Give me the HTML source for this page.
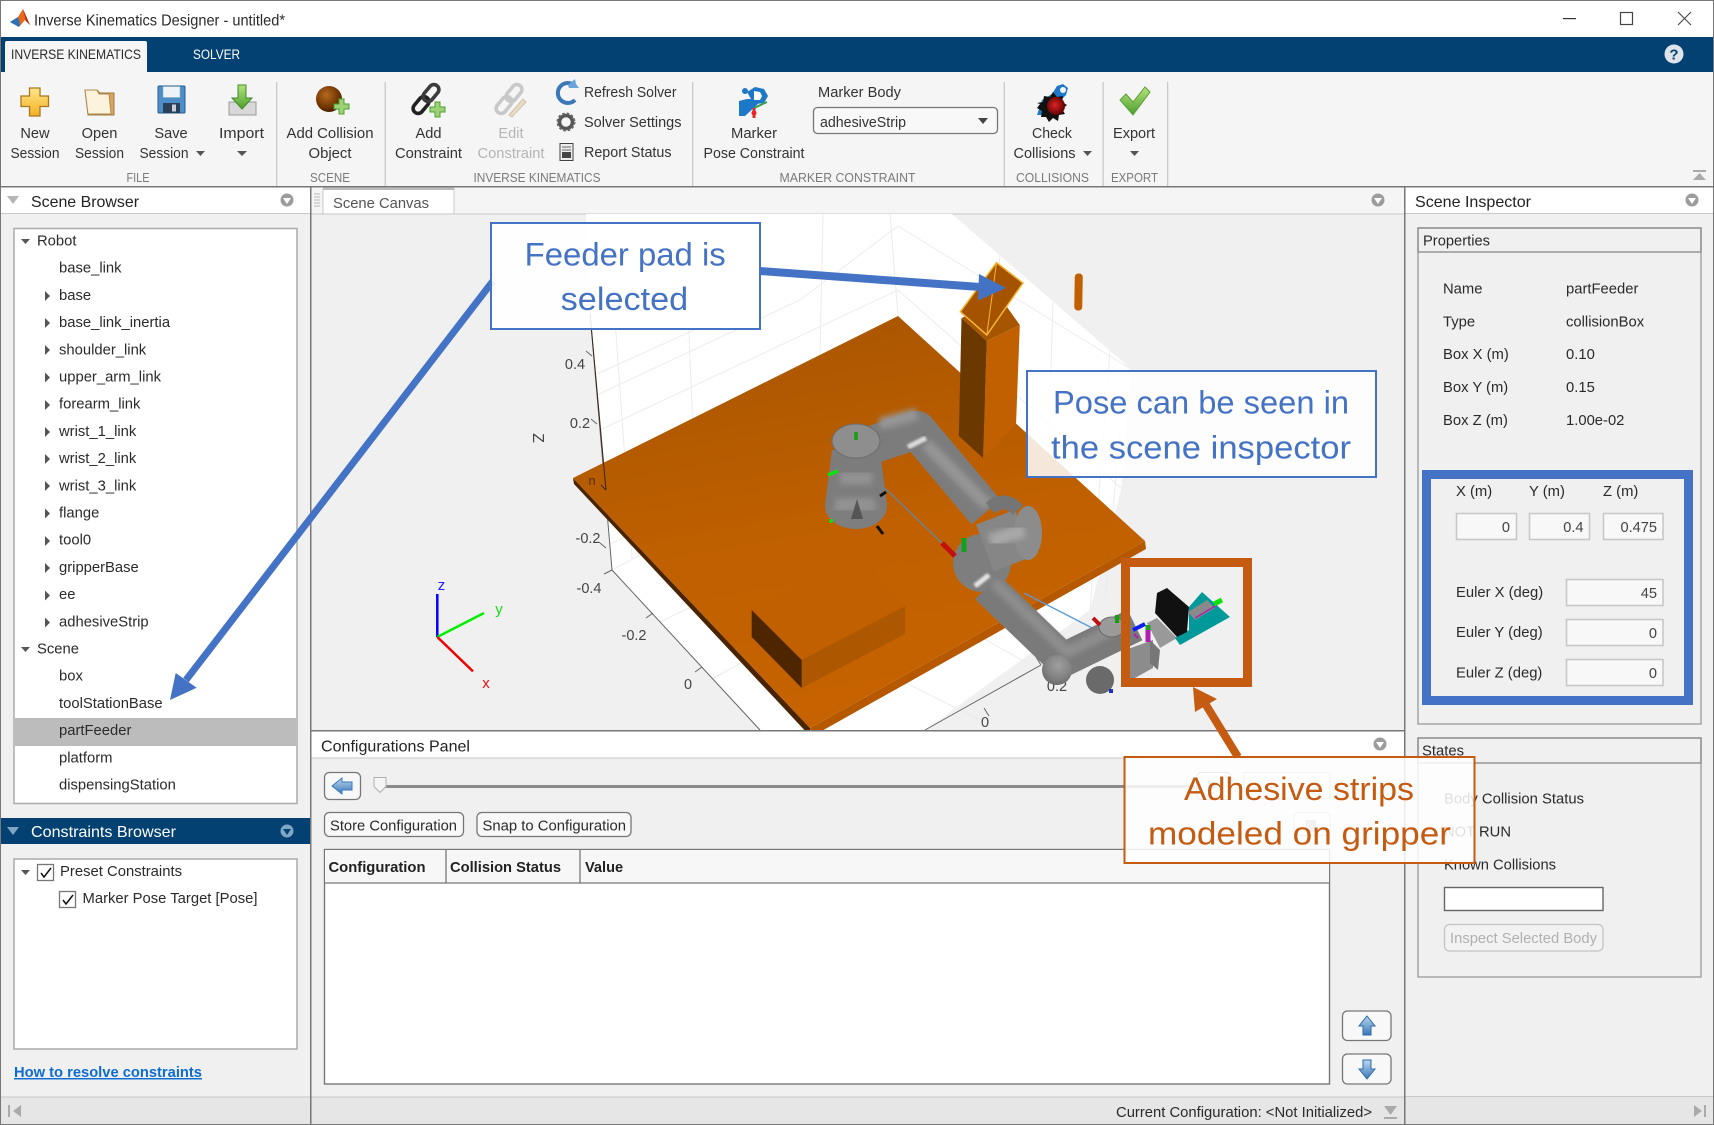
<!DOCTYPE html>
<html><head><meta charset="utf-8"><title>Inverse Kinematics Designer</title>
<style>
html,body{margin:0;padding:0;background:#f0f0f0;width:1714px;height:1125px;overflow:hidden}
svg{display:block;position:absolute;left:0;top:0}
text{font-family:"Liberation Sans",Arial,sans-serif;fill:#2a2a2a;font-size:14.8px}
.r{font-size:14.6px;fill:#333}
.d{font-size:14.6px;fill:#b5b5b5}
.s{font-size:13.2px;fill:#7a7a7a}
.h{font-size:16px;fill:#222}
.ax{font-size:14.5px;fill:#444}
.c{font-size:32px;fill:#4472c4}
.o{font-size:32px;fill:#c55a11}
.b{font-weight:bold;font-size:14.6px;fill:#222}
.v{text-anchor:end;font-size:14.6px;fill:#444}
.m{text-anchor:middle}
</style></head><body>
<svg width="1714" height="1125" viewBox="0 0 1714 1125" xmlns="http://www.w3.org/2000/svg">
<defs>
<linearGradient id="pl" x1="0.25" y1="0" x2="0.5" y2="1"><stop offset="0" stop-color="#a85500"/><stop offset=".55" stop-color="#c06000"/><stop offset="1" stop-color="#c76300"/></linearGradient>
<linearGradient id="gold" x1="0" y1="0" x2="0" y2="1"><stop offset="0" stop-color="#ffe68a"/><stop offset="1" stop-color="#f2b020"/></linearGradient>
<linearGradient id="grn" x1="0" y1="0" x2="0" y2="1"><stop offset="0" stop-color="#b4e27a"/><stop offset="1" stop-color="#4e9e2e"/></linearGradient>
<radialGradient id="ball" cx=".4" cy=".35" r=".7"><stop offset="0" stop-color="#b56a20"/><stop offset=".7" stop-color="#6e3300"/><stop offset="1" stop-color="#3c1b00"/></radialGradient>
<radialGradient id="rball" cx=".45" cy=".45" r=".6"><stop offset="0" stop-color="#d22"/><stop offset="1" stop-color="#500"/></radialGradient>
<radialGradient id="sph" cx=".55" cy=".35" r=".75"><stop offset="0" stop-color="#a0a0a0"/><stop offset=".6" stop-color="#808080"/><stop offset="1" stop-color="#626262"/></radialGradient>
<linearGradient id="arr" x1="0" y1="0" x2="0" y2="1"><stop offset="0" stop-color="#bcd6f0"/><stop offset="1" stop-color="#3a78b8"/></linearGradient>
<filter id="bl" x="-20%" y="-20%" width="140%" height="140%"><feGaussianBlur stdDeviation="3"/></filter>
<filter id="bs" x="-20%" y="-20%" width="140%" height="140%"><feGaussianBlur stdDeviation="1"/></filter>
</defs>

<!-- window -->
<rect width="1714" height="1125" fill="#f0f0f0"/>
<rect width="1714" height="37" fill="#fff"/>
<rect y="37" width="1714" height="35" fill="#024172"/>
<rect y="72" width="1714" height="114" fill="#f5f5f5"/>
<rect y="186" width="1714" height="1.5" fill="#777"/>

<!-- logo + title -->
<polygon points="10,22 18,17 23,9 30,25 25,20 19,27" fill="#e8681c"/>
<polygon points="10,22 18,17 20,24 19,27" fill="#2a72b8"/>
<polygon points="23,9 30,25 26,21" fill="#b02a10"/>
<text x="34" y="25.5" style="font-size:15.6px" textLength="251" lengthAdjust="spacingAndGlyphs">Inverse Kinematics Designer - untitled*</text>
<rect x="1563" y="18" width="13" height="1.2" fill="#333"/>
<rect x="1620.5" y="12.5" width="12" height="12" fill="none" stroke="#444" stroke-width="1.2"/>
<path d="M1678 12L1691 25M1691 12L1678 25" stroke="#444" stroke-width="1.1"/>

<!-- tabs -->
<path d="M5 72V43q0-2 2-2H145q2 0 2 2V72z" fill="#f5f5f5"/>
<text x="11" y="59" style="font-size:13.4px" textLength="130" lengthAdjust="spacingAndGlyphs" fill="#333">INVERSE KINEMATICS</text>
<text x="193" y="59" style="font-size:13.4px;fill:#fff" textLength="47" lengthAdjust="spacingAndGlyphs">SOLVER</text>
<circle cx="1674" cy="54" r="9.5" fill="#dfe4ea"/>
<text x="1674" y="59.5" class="m" style="font-size:15px;font-weight:bold;fill:#024172">?</text>

<!-- separators -->
<g fill="#c9c9c9"><rect x="276" y="82" width="1.3" height="104"/><rect x="384.6" y="82" width="1.3" height="104"/><rect x="692" y="82" width="1.3" height="104"/><rect x="1003.7" y="82" width="1.3" height="104"/><rect x="1102.5" y="82" width="1.3" height="104"/><rect x="1167" y="82" width="1.3" height="104"/></g>

<!-- icons: new -->
<path d="M29.500 88h10.500v8h8.500v10.500h-8.500v9.500h-10.500v-9.500h-8.500v-10.500h8.500z" fill="url(#gold)" stroke="#a87820" stroke-width="1.3"/>
<!-- open -->
<path d="M85 90h12l3 3h14v22H88z" fill="#d9a55c" stroke="#a07a3c" stroke-width="1"/>
<path d="M85 90h12l2 4h10l2 20H88z" fill="#fbf3dc" stroke="#b08b50" stroke-width="1"/>
<!-- save -->
<rect x="158" y="86" width="27" height="27" rx="1" fill="#4d8ec8" stroke="#1f5c92"/>
<rect x="163" y="86.500" width="17" height="11" fill="#eef3f8" stroke="#8aa" stroke-width=".5"/>
<rect x="163" y="103" width="17" height="10" fill="#2a3f58"/>
<rect x="172" y="104.500" width="4" height="7" fill="#ccd"/>
<!-- import -->
<rect x="229" y="102" width="27" height="13" fill="#d8d8d8" stroke="#9a9a9a"/>
<path d="M238 85h8v13h6l-10 11-10-11h6z" fill="url(#grn)" stroke="#3e8a26" stroke-width="1"/>
<!-- collision -->
<circle cx="329" cy="99" r="13" fill="url(#ball)"/>
<path d="M334 103h5v-5h5v5h5v5h-5v5h-5v-5h-5z" transform="translate(0,1)" fill="#9ed27a" stroke="#4e9e2e"/>
<!-- add constraint -->
<g fill="none" stroke-width="3.6">
<rect x="-9.500" y="-5" width="19" height="10" rx="5" transform="translate(421,105) rotate(-50)" stroke="#222"/>
<rect x="-9.500" y="-5" width="19" height="10" rx="5" transform="translate(431,93) rotate(-50)" stroke="#3c3c3c"/>
</g>
<path d="M430 107h5v-5h5v5h5v5h-5v5h-5v-5h-5z" fill="#9ed27a" stroke="#4e9e2e"/>
<!-- edit constraint -->
<g fill="none" stroke="#c8c8c8" stroke-width="3.6">
<rect x="-9.500" y="-5" width="19" height="10" rx="5" transform="translate(504,105) rotate(-50)"/>
<rect x="-9.500" y="-5" width="19" height="10" rx="5" transform="translate(514,93) rotate(-50)"/>
</g>
<path d="M509 115l14-16 3 3-14 15z" fill="#e8dcc2" stroke="#cfc4aa"/>
<!-- refresh -->
<path d="M575 86a10 10 0 1 0 0 14" fill="none" stroke="#3a78b8" stroke-width="4"/>
<path d="M568 85l7-6 1 5 3 4-10 0z" fill="#6aa4d8"/>
<text x="584" y="97" class="r" textLength="92.500" lengthAdjust="spacingAndGlyphs">Refresh Solver</text>
<!-- settings -->
<circle cx="566" cy="122" r="6.500" fill="none" stroke="#555" stroke-width="3.500"/>
<circle cx="566" cy="122" r="8.500" fill="none" stroke="#666" stroke-width="2" stroke-dasharray="2.500 2"/>
<text x="584" y="127" class="r" textLength="97.500" lengthAdjust="spacingAndGlyphs">Solver Settings</text>
<!-- report -->
<rect x="560" y="143.500" width="13" height="17" fill="#eee" stroke="#444"/>
<rect x="562" y="152" width="9" height="6" fill="#444"/>
<path d="M562 147h9M562 150h9" stroke="#666"/>
<text x="584" y="157" class="r" textLength="87.500" lengthAdjust="spacingAndGlyphs">Report Status</text>
<!-- marker pose -->
<path d="M739 101l8-2 9 0 3 4-14 13-6 0z" fill="#1e78c8"/>
<path d="M747 92l8-5 9 2 4 7-4 7-9 1-4-5z" fill="#1e78c8"/><path d="M754 91l6 1 2 4-2 4-6 0z" fill="#fff"/>
<circle cx="745" cy="91" r="3" fill="#1e78c8"/>
<path d="M754 108l13-6" stroke="#3a9a50" stroke-width="2"/>
<path d="M754 108v10" stroke="#c33" stroke-width="3"/><circle cx="754" cy="113" r="2.500" fill="#e22"/>
<!-- dropdown -->
<text x="818" y="97" class="r" textLength="83" lengthAdjust="spacingAndGlyphs">Marker Body</text>
<rect x="813.500" y="107.500" width="184" height="26" rx="4" fill="#f8f8f8" stroke="#777" stroke-width="1.300"/>
<text x="820" y="127" class="r" textLength="86" lengthAdjust="spacingAndGlyphs">adhesiveStrip</text>
<polygon points="978,118 988,118 983,124" fill="#444"/>
<!-- check collision -->
<path d="M1037 115l5-15 10-6 5-8 6-2 5 4-2 7-8 8-5 12z" fill="#1e78c8"/>
<circle cx="1063" cy="90" r="3" fill="#f5f5f5"/>
<path d="M1037 103l6-1 1-6 6 1 3-5 4 5 6-1-1 6 5 3-5 4 3 5-6 1-1 6-5-3-4 4-3-5-5 0 1-6-5-3 3-4z" fill="#111"/>
<circle cx="1056" cy="106" r="9" fill="url(#rball)"/>
<!-- export -->
<path d="M1120 100l6-6 7 8 12-15 5 5-17 23z" fill="url(#grn)" stroke="#5a9e3c"/>

<!-- ribbon labels -->
<g class="r">
<text x="35" y="138" class="r m">New</text><text x="35" y="158" class="r m" textLength="49" lengthAdjust="spacingAndGlyphs">Session</text>
<text x="99.500" y="138" class="r m">Open</text><text x="99.500" y="158" class="r m" textLength="49" lengthAdjust="spacingAndGlyphs">Session</text>
<text x="171" y="138" class="r m">Save</text><text x="139.500" y="158" class="r" textLength="49" lengthAdjust="spacingAndGlyphs">Session</text>
<text x="241.500" y="138" class="r m" textLength="45" lengthAdjust="spacingAndGlyphs">Import</text>
<text x="330" y="138" class="r m" textLength="87" lengthAdjust="spacingAndGlyphs">Add Collision</text><text x="330" y="158" class="r m" textLength="43" lengthAdjust="spacingAndGlyphs">Object</text>
<text x="428.500" y="138" class="r m">Add</text><text x="428.500" y="158" class="r m" textLength="67" lengthAdjust="spacingAndGlyphs">Constraint</text>
<text x="511" y="138" class="d m">Edit</text><text x="511" y="158" class="d m" textLength="67" lengthAdjust="spacingAndGlyphs">Constraint</text>
<text x="754" y="138" class="r m" textLength="46" lengthAdjust="spacingAndGlyphs">Marker</text><text x="754" y="158" class="r m" textLength="101" lengthAdjust="spacingAndGlyphs">Pose Constraint</text>
<text x="1052" y="138" class="r m" textLength="40" lengthAdjust="spacingAndGlyphs">Check</text><text x="1013.500" y="158" class="r" textLength="62" lengthAdjust="spacingAndGlyphs">Collisions</text>
<text x="1134" y="138" class="r m" textLength="42" lengthAdjust="spacingAndGlyphs">Export</text>
</g>
<g fill="#555"><polygon points="196,151 205,151 200.500,156"/><polygon points="237,151 247,151 242,156"/><polygon points="1083,151 1092,151 1087.500,156"/><polygon points="1130,151 1139,151 1134.500,156"/></g>
<text x="138" y="182" class="s m" textLength="23" lengthAdjust="spacingAndGlyphs">FILE</text>
<text x="330" y="182" class="s m" textLength="40" lengthAdjust="spacingAndGlyphs">SCENE</text>
<text x="537" y="182" class="s m" textLength="127" lengthAdjust="spacingAndGlyphs">INVERSE KINEMATICS</text>
<text x="847.500" y="182" class="s m" textLength="136" lengthAdjust="spacingAndGlyphs">MARKER CONSTRAINT</text>
<text x="1052.500" y="182" class="s m" textLength="73" lengthAdjust="spacingAndGlyphs">COLLISIONS</text>
<text x="1134.500" y="182" class="s m" textLength="47" lengthAdjust="spacingAndGlyphs">EXPORT</text>
<rect x="1693" y="170" width="13" height="2" fill="#aaa"/><polygon points="1699.500,173 1706,180 1693,180" fill="#aaa"/>

<!-- ===== canvas area ===== -->
<rect x="311" y="187.500" width="1094" height="27" fill="#f5f5f5"/>
<rect x="311" y="214" width="1094" height="517" fill="#f0f0f0"/>
<rect x="311" y="213.500" width="1094" height="1" fill="#c8c8c8"/>
<path d="M323 214V189q0-1 1-1H453q1 0 1 1V214z" fill="#fff" stroke="#c8c8c8"/>
<rect x="323" y="188" width="131" height="2" fill="#bbb"/>
<text x="333" y="208" style="font-size:14.6px;fill:#555" textLength="96" lengthAdjust="spacingAndGlyphs">Scene Canvas</text>
<path d="M314 194h6M314 197h6M314 200h6M314 203h6M314 206h6" stroke="#ccc" stroke-width="1.500"/>

<!-- axes walls -->
<polygon points="586,214 952,214 1131,369 1121,490 1090,610 925,730 760,730 612,570 590,313" fill="#fff"/>
<g stroke="#ececec" stroke-width="1" fill="none">
<path d="M597 395L800 300 898 226M597 374L760 300M600 430L898 290M604 490L898 355 M608 545L800 455"/>
<path d="M615 320L632 558M688 310L694 455M823 214L820 355M890 214L898 316"/>
<path d="M898 226L1131 369M898 290L1121 488M898 355L1121 560"/>
<path d="M1000 255L990 400M1053 300L1048 470M1110 350L1090 610M1120 430L1105 600"/>
<path d="M612 570L800 470M660 622L850 530M710 680L900 575M980 720L760 610M1040 670L860 570"/>
</g>
<path d="M590 313L612 570L760 730M925 730L1041 665" fill="none" stroke="#666" stroke-width="1"/>
<path d="M592 356l-6-5M597 424l-6-5M606 548l-6-5M612 570l-8 4M653 613l-7 5M702 667l-7 5M984 708l5 8M1041 665l-5-8" stroke="#666" stroke-width="1" fill="none"/>
<text x="575" y="369" class="ax m">0.4</text><text x="580" y="428" class="ax m">0.2</text>
<text x="588" y="543" class="ax m">-0.2</text><text x="589" y="593" class="ax m">-0.4</text>
<text x="634" y="640" class="ax m">-0.2</text><text x="688" y="689" class="ax m">0</text><text x="985" y="727" class="ax m">0</text><text x="1057" y="691" class="ax m">0.2</text>
<text transform="translate(533,438) rotate(90)" class="ax m" style="font-size:16px">Z</text>

<!-- platform -->
<polygon points="1145,541 810,728 811,737 1146,549" fill="#b55800"/>
<polygon points="573,478 810,728 810,736 574,484" fill="#4a2400"/>
<polygon points="573,478 898,316 1145,541 810,728" fill="url(#pl)"/>
<path d="M590 313L606 490" stroke="#3a2510" stroke-width="1" fill="none"/>
<text x="592" y="485" class="m" style="font-size:13px;fill:#5a3008">n</text>
<path d="M606 490l-5-5" stroke="#3a2510"/>

<!-- small box -->
<polygon points="751.700,610 801.700,660 905,606 855,556" fill="#c06000"/>
<polygon points="801.700,660 905,606 905,634 801.700,688" fill="#ad5800"/>
<polygon points="751.700,610 801.700,660 801.700,688 751.700,637" fill="#4d2600"/>

<!-- pillar -->
<polygon points="986.800,341 1019.800,325 1016,425 983,458" fill="#c06000"/>
<polygon points="961.500,318 986.800,341 983,458 958.800,436" fill="#6b3800"/>
<polygon points="961.500,318 1002,300 1019.800,325 986.800,341" fill="#a85500"/>
<polygon points="996.500,262.600 1023,283 986.800,335 960.300,311.800" fill="#a65300" stroke="#f2b632" stroke-width="1.500"/>
<path d="M996.500 262.600L986.800 335L1023 283" fill="none" stroke="#f2b632" stroke-width="1"/>
<rect x="1074.500" y="273.500" width="8" height="37" rx="3.500" fill="#c06000" transform="rotate(1 1078 292)"/>

<!-- triad -->
<path d="M437.300 637V594" stroke="#0000ff" stroke-width="2.500"/>
<path d="M437.300 637L484 613" stroke="#00f000" stroke-width="2.500"/>
<path d="M437.300 637L473 671.400" stroke="#f00000" stroke-width="2.500"/>
<text x="441.500" y="590" class="m" style="font-size:15px;fill:#2222ff">z</text>
<text x="499" y="614" class="m" style="font-size:15px;fill:#18d818">y</text>
<text x="486" y="688" class="m" style="font-size:15px;fill:#f01010">x</text>

<!-- frame interior -->
<rect x="1128" y="565" width="118" height="116" fill="#f0f0f0"/>

<!-- robot -->
<path d="M870 474L942 543" stroke="#4a90d0" stroke-width="1"/>
<path d="M1024 593L1100 632" stroke="#5a9ad8" stroke-width="1.300"/>
<ellipse cx="856" cy="506" rx="31" ry="23" fill="#7e7e7e"/>
<polygon points="832,450 880,450 887,505 825,505" fill="#7c7c7c"/>
<path d="M862 448L917 430L986 512" fill="none" stroke="#7c7c7c" stroke-width="38" stroke-linejoin="round"/>
<path d="M840 478H872M835 505H875" stroke="#929292" stroke-width="14" filter="url(#bl)"/>
<ellipse cx="856" cy="441" rx="24" ry="17" fill="#8e8e8e" stroke="#6c6c6c"/>
<path d="M851 519l6-20 6 20z" fill="#555"/>
<path d="M880 424L917 414M926 444L988 506" fill="none" stroke="#959595" stroke-width="12" filter="url(#bl)"/>
<path d="M908 447l18-9" stroke="#dcdcdc" stroke-width="5" filter="url(#bs)"/>
<circle cx="982" cy="563" r="29" fill="#7e7e7e"/>
<path d="M985 548L1024 533" stroke="#868686" stroke-width="50"/>
<ellipse cx="1028" cy="533" rx="14" ry="27" fill="#8c8c8c"/>
<path d="M990 508Q1005 496 1018 510" stroke="#757575" stroke-width="14" fill="none"/>
<path d="M990 541L1024 530" stroke="#a8a8a8" stroke-width="14" filter="url(#bl)"/>
<path d="M987 587L1063 660L1135 625" fill="none" stroke="#7a7a7a" stroke-width="34" stroke-linejoin="round"/>
<path d="M994 582L1067 652L1125 624" fill="none" stroke="#8e8e8e" stroke-width="11" filter="url(#bl)"/>
<path d="M975 586l14-11" stroke="#e4e4e4" stroke-width="5" filter="url(#bs)"/>
<circle cx="1100" cy="680" r="14" fill="#6a6a6a"/>
<circle cx="1057" cy="670" r="15" fill="url(#sph)"/>
<ellipse cx="1112" cy="627" rx="13" ry="10" fill="#9a9a9a" stroke="#6a6a6a"/>
<path d="M1125 650L1153 640V668L1135 678H1125z" fill="#8c8c8c"/>
<polygon points="1150,640 1160,650 1158,670 1150,663" fill="#777"/>
<polygon points="1147,623 1157,618 1177,638 1160,648" fill="#999"/>
<polygon points="1202,592 1230,617 1180,645 1175,638 1189,630 1189,607" fill="#009999"/>
<polygon points="1157,593 1167,588 1189,607 1187,632 1177,637 1155,613" fill="#111"/>
<polygon points="1188,612 1207,600 1215,608 1195,620" fill="#8a8a8a"/>
<path d="M1195 618L1217 605" stroke="#b020b0" stroke-width="1.500"/>
<path d="M1214 604l8-4" stroke="#10e010" stroke-width="5"/>
<path d="M1133 630L1145 624" stroke="#0a20f0" stroke-width="4"/>
<path d="M1148 629V642" stroke="#b020b0" stroke-width="5"/><path d="M1148 625V630" stroke="#20a020" stroke-width="5"/>
<path d="M1134 634l4 4" stroke="#b020b0" stroke-width="2"/>
<path d="M1117 615V623" stroke="#10a010" stroke-width="4"/>
<path d="M1093 618L1100 625" stroke="#c01010" stroke-width="4"/>
<path d="M1111 689V693" stroke="#1a30c0" stroke-width="4"/>
<path d="M964 538V552" stroke="#10a020" stroke-width="5"/>
<path d="M942 543L955 556" stroke="#c01010" stroke-width="5"/>
<path d="M856 432V440" stroke="#10a010" stroke-width="3.500"/>
<path d="M828 475l10-4" stroke="#10e010" stroke-width="3.500"/>
<path d="M886 492l-6 4M877 526l6 8" stroke="#111" stroke-width="3"/>
<circle cx="831" cy="521" r="2" fill="#10e010"/>

<!-- orange frame -->
<rect x="1125.500" y="562.500" width="122" height="120" fill="none" stroke="#c55a11" stroke-width="9"/>

<!-- ===== left panel ===== -->
<rect x="0" y="187.500" width="310" height="938" fill="#f0f0f0"/>
<rect x="0" y="187.500" width="310" height="26" fill="#fff"/>
<rect x="0" y="213" width="310" height="1" fill="#c8c8c8"/>
<polygon points="7,196 19,196 13,204" fill="#b5b5b5"/>
<text x="31" y="207" class="h" textLength="108" lengthAdjust="spacingAndGlyphs">Scene Browser</text>
<rect x="14" y="228.500" width="283" height="575" fill="#fff" stroke="#aaa" stroke-width="1.500"/>
<rect x="15" y="718" width="281" height="28" fill="#bcbcbc"/>
<g transform="translate(0,0.5)">
<text x="37" y="245">Robot</text>
<text x="59" y="272.200">base_link</text>
<text x="59" y="299.400">base</text>
<text x="59" y="326.600">base_link_inertia</text>
<text x="59" y="353.800">shoulder_link</text>
<text x="59" y="381">upper_arm_link</text>
<text x="59" y="408.200">forearm_link</text>
<text x="59" y="435.400">wrist_1_link</text>
<text x="59" y="462.600">wrist_2_link</text>
<text x="59" y="489.800">wrist_3_link</text>
<text x="59" y="517">flange</text>
<text x="59" y="544.200">tool0</text>
<text x="59" y="571.400">gripperBase</text>
<text x="59" y="598.600">ee</text>
<text x="59" y="625.800">adhesiveStrip</text>
<text x="37" y="653">Scene</text>
<text x="59" y="680.200">box</text>
<text x="59" y="707.400">toolStationBase</text>
<text x="59" y="734.600">partFeeder</text>
<text x="59" y="761.800">platform</text>
<text x="59" y="789">dispensingStation</text>
</g>
<g fill="#555">
<polygon points="21,239 30,239 25.500,244"/><polygon points="21,647 30,647 25.500,652"/>
<polygon points="45,291 50,296 45,301"/><polygon points="45,318 50,323 45,328"/><polygon points="45,345 50,350 45,355"/><polygon points="45,372.500 50,377.500 45,382.500"/><polygon points="45,400 50,405 45,410"/><polygon points="45,427 50,432 45,437"/><polygon points="45,454 50,459 45,464"/><polygon points="45,481 50,486 45,491"/><polygon points="45,508.500 50,513.500 45,518.500"/><polygon points="45,536 50,541 45,546"/><polygon points="45,563 50,568 45,573"/><polygon points="45,590.500 50,595.500 45,600.500"/><polygon points="45,617.500 50,622.500 45,627.500"/>
</g>

<rect x="0" y="818" width="310" height="26" fill="#024172"/>
<polygon points="7,827 19,827 13,835" fill="#7fa6c4"/>
<text x="31" y="837" class="h" style="fill:#fff" textLength="145" lengthAdjust="spacingAndGlyphs">Constraints Browser</text>
<rect x="14" y="859" width="283" height="190" fill="#fff" stroke="#aaa" stroke-width="1.500"/>
<polygon points="21,870 30,870 25.500,875" fill="#555"/>
<rect x="37.500" y="864.500" width="16" height="16" fill="#fff" stroke="#777" stroke-width="1.300"/>
<path d="M41 873l3 4 7-9" fill="none" stroke="#111" stroke-width="1.500"/>
<text x="60" y="876" textLength="122" lengthAdjust="spacingAndGlyphs">Preset Constraints</text>
<rect x="59.500" y="891.500" width="16" height="16" fill="#fff" stroke="#777" stroke-width="1.300"/>
<path d="M63 900l3 4 7-9" fill="none" stroke="#111" stroke-width="1.500"/>
<text x="82.500" y="903" textLength="175" lengthAdjust="spacingAndGlyphs">Marker Pose Target [Pose]</text>
<text x="14" y="1077" style="font-size:14.6px;font-weight:bold;fill:#0d6cd0;text-decoration:underline" textLength="188" lengthAdjust="spacingAndGlyphs">How to resolve constraints</text>
<rect x="0" y="1097" width="310" height="28" fill="#e6e6e6"/>
<rect x="0" y="1096.500" width="310" height="1" fill="#c8c8c8"/>
<rect x="8" y="1105" width="2" height="12" fill="#aaa"/><polygon points="21,1105 21,1117 13,1111" fill="#aaa"/>

<!-- ===== config panel ===== -->
<rect x="311" y="731" width="1094" height="394" fill="#f0f0f0"/>
<rect x="311" y="730" width="1094" height="1.500" fill="#777"/>
<rect x="311" y="731.500" width="1094" height="26" fill="#fff"/>
<rect x="311" y="757.500" width="1094" height="1" fill="#c8c8c8"/>
<text x="321" y="751.500" class="h" textLength="149" lengthAdjust="spacingAndGlyphs">Configurations Panel</text>
<rect x="324.500" y="772.500" width="36" height="27" rx="5" fill="#f8f8f8" stroke="#777" stroke-width="1.300"/>
<path d="M332 786l10-8v4h10v8h-10v4z" fill="url(#arr)" stroke="#3a78b8"/>
<rect x="385" y="785" width="810" height="3" fill="#8a8a8a"/>
<path d="M374 777.500h12v9l-6 6-6-6z" fill="#f5f5f5" stroke="#b0b0b0"/>
<rect x="1196.500" y="772.500" width="35" height="27" rx="5" fill="#f8f8f8" stroke="#888"/>
<path d="M1208 780l10 6-10 6z" fill="#6a9ad0"/>
<rect x="1244" y="772.500" width="86" height="26" fill="#f8f8f8" stroke="#aaa"/>
<rect x="324.500" y="812.500" width="139" height="24" rx="5" fill="#f8f8f8" stroke="#777" stroke-width="1.300"/>
<text x="330" y="830.500" textLength="127" lengthAdjust="spacingAndGlyphs">Store Configuration</text>
<rect x="477" y="812.500" width="154" height="24" rx="5" fill="#f8f8f8" stroke="#777" stroke-width="1.300"/>
<text x="482.500" y="830.500" textLength="143.500" lengthAdjust="spacingAndGlyphs">Snap to Configuration</text>
<rect x="1294" y="812.500" width="36" height="23" rx="5" fill="#f8f8f8" stroke="#aaa"/>
<rect x="1306" y="820" width="10" height="12" fill="#aaa"/>
<rect x="324.500" y="849.500" width="1005" height="234.500" fill="#fff" stroke="#777" stroke-width="1.400"/>
<rect x="325" y="850" width="1004" height="33" fill="#f7f7f7"/>
<path d="M324.500 883H1329.500M446 850V883M580 850V883" stroke="#777" stroke-width="1.300"/>
<text x="328.500" y="872" class="b" textLength="97" lengthAdjust="spacingAndGlyphs">Configuration</text>
<text x="450" y="872" class="b" textLength="111" lengthAdjust="spacingAndGlyphs">Collision Status</text>
<text x="585" y="872" class="b">Value</text>
<rect x="1342.500" y="1011" width="48.500" height="29.500" rx="5" fill="#f8f8f8" stroke="#777" stroke-width="1.300"/>
<path d="M1367 1016l8 10h-4v9h-8v-9h-4z" fill="url(#arr)" stroke="#2a6aa8"/>
<rect x="1342.500" y="1054" width="48.500" height="30" rx="5" fill="#f8f8f8" stroke="#777" stroke-width="1.300"/>
<path d="M1367 1079l8-10h-4v-9h-8v9h-4z" fill="url(#arr)" stroke="#2a6aa8"/>
<rect x="311" y="1097" width="1094" height="28" fill="#e6e6e6"/>
<rect x="311" y="1096.500" width="1094" height="1" fill="#c8c8c8"/>
<text x="1116" y="1117" style="font-size:14.6px" textLength="256" lengthAdjust="spacingAndGlyphs">Current Configuration: &lt;Not Initialized&gt;</text>
<polygon points="1384,1106 1397,1106 1390.500,1115" fill="#aaa"/><rect x="1384" y="1117" width="13" height="2" fill="#aaa"/>

<!-- ===== right panel ===== -->
<rect x="1405" y="187.500" width="309" height="938" fill="#f0f0f0"/>
<rect x="1405" y="187.500" width="309" height="26" fill="#fff"/>
<rect x="1405" y="213" width="309" height="1" fill="#c8c8c8"/>
<text x="1415" y="207" class="h" textLength="116" lengthAdjust="spacingAndGlyphs">Scene Inspector</text>
<rect x="1418" y="228" width="283" height="496" fill="none" stroke="#999" stroke-width="1.300"/>
<rect x="1418" y="228" width="283" height="24" fill="none" stroke="#888" stroke-width="1.300"/>
<text x="1423" y="245.500" textLength="67" lengthAdjust="spacingAndGlyphs">Properties</text>
<g>
<text x="1443" y="293.500">Name</text><text x="1566" y="293.500">partFeeder</text>
<text x="1443" y="326.500">Type</text><text x="1566" y="326.500">collisionBox</text>
<text x="1443" y="359">Box X (m)</text><text x="1566" y="359">0.10</text>
<text x="1443" y="392">Box Y (m)</text><text x="1566" y="392">0.15</text>
<text x="1443" y="425">Box Z (m)</text><text x="1566" y="425">1.00e-02</text>
</g>
<rect x="1426.500" y="474.500" width="262" height="226" fill="#f0f0f0" stroke="#4472c4" stroke-width="9"/>
<g>
<text x="1456" y="496">X (m)</text><text x="1529" y="496">Y (m)</text><text x="1603" y="496">Z (m)</text>
<text x="1456" y="597">Euler X (deg)</text><text x="1456" y="637">Euler Y (deg)</text><text x="1456" y="677.500">Euler Z (deg)</text>
</g>
<g fill="#f8f8f8" stroke="#c8c8c8" stroke-width="1.600">
<rect x="1456.500" y="513.500" width="60" height="26"/><rect x="1529.500" y="513.500" width="60" height="26"/><rect x="1603.500" y="513.500" width="59.500" height="26"/>
<rect x="1566.500" y="579.500" width="96.500" height="26"/><rect x="1566.500" y="619.500" width="96.500" height="26"/><rect x="1566.500" y="659.500" width="96.500" height="26"/>
</g>
<text x="1510" y="532" class="v">0</text><text x="1583.500" y="532" class="v">0.4</text><text x="1657" y="532" class="v">0.475</text>
<text x="1657" y="598" class="v">45</text><text x="1657" y="638" class="v">0</text><text x="1657" y="678" class="v">0</text>

<rect x="1418" y="738" width="283" height="239" fill="none" stroke="#999" stroke-width="1.300"/>
<rect x="1418" y="738" width="283" height="25" fill="none" stroke="#888" stroke-width="1.300"/>
<text x="1422" y="755.500" textLength="42" lengthAdjust="spacingAndGlyphs">States</text>
<text x="1444" y="803.500" textLength="140" lengthAdjust="spacingAndGlyphs">Body Collision Status</text>
<text x="1444" y="836.500" textLength="67" lengthAdjust="spacingAndGlyphs">NOT RUN</text>
<text x="1444" y="869.500" textLength="112" lengthAdjust="spacingAndGlyphs">Known Collisions</text>
<rect x="1444.500" y="887.500" width="158.500" height="23" fill="#fff" stroke="#666" stroke-width="1.400"/>
<rect x="1444.500" y="924.500" width="158.500" height="26.500" rx="5" fill="#f2f2f2" stroke="#c4c4c4" stroke-width="1.300"/>
<text x="1450" y="943" style="font-size:14.6px;fill:#b0b0b0" textLength="147" lengthAdjust="spacingAndGlyphs">Inspect Selected Body</text>
<rect x="1405" y="1096.500" width="309" height="28.500" fill="#e6e6e6"/>
<rect x="1405" y="1096" width="309" height="1" fill="#c8c8c8"/>
<polygon points="1694,1105 1694,1117 1702,1111" fill="#aaa"/><rect x="1704" y="1105" width="2" height="12" fill="#aaa"/>

<!-- panel menu dots -->
<g fill="#9c9c9c"><circle cx="287" cy="200" r="6.500"/><circle cx="1378" cy="200" r="6.500"/><circle cx="1692" cy="200" r="6.500"/><circle cx="1380" cy="744" r="6.500"/></g>
<circle cx="287" cy="831" r="6.500" fill="#7fa6c4"/>
<g fill="#fff"><polygon points="283,198 291,198 287,204"/><polygon points="1374,198 1382,198 1378,204"/><polygon points="1688,198 1696,198 1692,204"/><polygon points="1376,742 1384,742 1380,748"/></g>
<polygon points="283,829 291,829 287,835" fill="#024172"/>

<!-- vertical dividers -->
<rect x="310" y="187" width="1.500" height="938" fill="#777"/>
<rect x="1404" y="187" width="1.500" height="938" fill="#777"/>
<rect x="0" y="0" width="1714" height="1" fill="#777"/>
<rect x="0" y="1124" width="1714" height="1" fill="#777"/>
<rect x="0" y="0" width="1" height="1125" fill="#777"/>
<rect x="1713" y="0" width="1" height="1125" fill="#777"/>

<!-- ===== callouts ===== -->
<path d="M493 281L186 680" stroke="#4472c4" stroke-width="7"/>
<polygon points="170,700 175.700,673 196.700,687.700" fill="#4472c4"/>
<path d="M760 271L980 287" stroke="#4472c4" stroke-width="8"/>
<polygon points="1006,288 979,274 978,300.500" fill="#4472c4"/>
<path d="M1206 705L1238 757" stroke="#c55a11" stroke-width="8"/>
<polygon points="1193,687 1217,699 1195,712" fill="#c55a11"/>

<rect x="491" y="223" width="269" height="106" fill="#fff" fill-opacity=".9" stroke="#4472c4" stroke-width="2"/>
<text x="524.700" y="265.500" class="c" textLength="201" lengthAdjust="spacingAndGlyphs">Feeder pad is</text>
<text x="560.700" y="310" class="c" textLength="127.500" lengthAdjust="spacingAndGlyphs">selected</text>

<rect x="1027" y="371" width="349" height="106" fill="#fff" fill-opacity=".85" stroke="#4472c4" stroke-width="2"/>
<text x="1053" y="413.500" class="c" textLength="296" lengthAdjust="spacingAndGlyphs">Pose can be seen in</text>
<text x="1051" y="458.500" class="c" textLength="300" lengthAdjust="spacingAndGlyphs">the scene inspector</text>

<rect x="1124.500" y="757" width="350" height="106" fill="#fff" fill-opacity=".85" stroke="#c55a11" stroke-width="2"/>
<text x="1184" y="800" class="o" textLength="230" lengthAdjust="spacingAndGlyphs">Adhesive strips</text>
<text x="1148" y="844.500" class="o" textLength="303" lengthAdjust="spacingAndGlyphs">modeled on gripper</text>
</svg>
</body></html>
